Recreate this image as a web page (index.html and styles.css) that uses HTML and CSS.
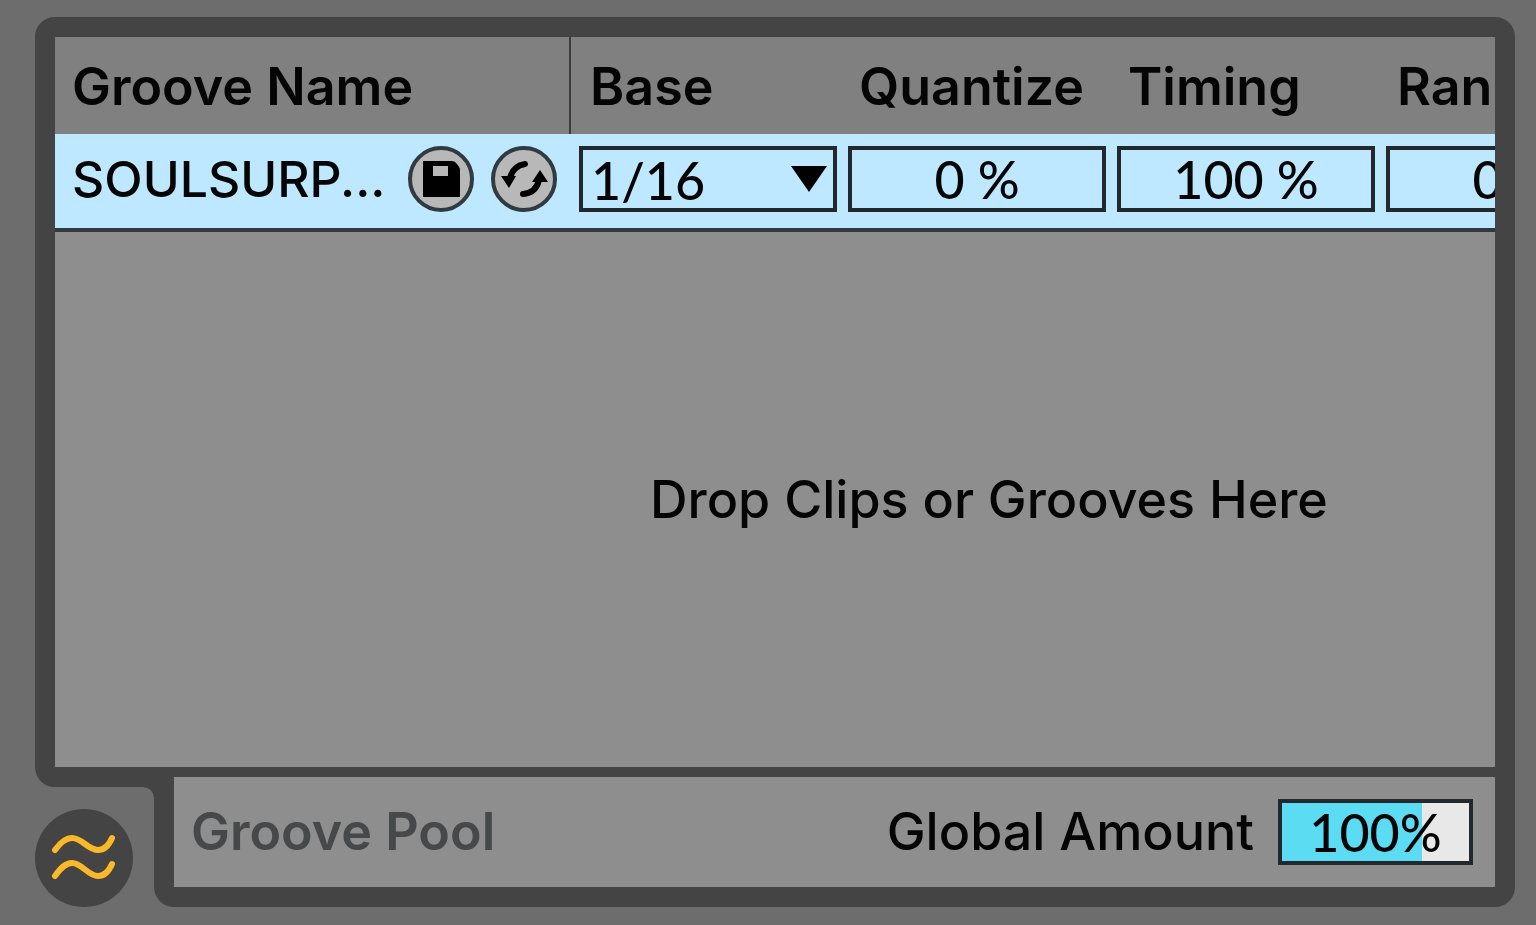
FILE: index.html
```html
<!DOCTYPE html>
<html lang="en">
<head>
    <meta charset="UTF-8">
    <meta name="viewport" content="width=device-width, initial-scale=1.0">
    <title>Groove Pool</title>
    <link rel="stylesheet" href="styles.css">
</head>
<body>
    <main class="groove-pool">
        <section class="pool-list">
            <div class="pool-scroll">
                <table class="groove-table">
                    <thead>
                        <tr>
                            <th class="col-name">Groove Name</th>
                            <th>Base</th>
                            <th>Quantize</th>
                            <th>Timing</th>
                            <th>Ran</th>
                        </tr>
                    </thead>
                    <tbody>
                        <tr>
                            <td>
                                <div class="name-cell">
                                    <span class="groove-name">SOULSURP...</span>
                                    <button class="round-btn" type="button" aria-label="Save Groove">
                                        <svg viewBox="0 0 66 66">
                                            <path d="M15 15h29q3 0 5 3l2 3q1 1 1 3v27H15z"/>
                                            <path class="cutout" d="M25 20h15v10H25z"/>
                                        </svg>
                                    </button>
                                    <button class="round-btn" type="button" aria-label="Hot-Swap Groove">
                                        <svg viewBox="0 0 66 66">
                                            <path class="arc" d="M34 18Q22 20 19 32"/>
                                            <path d="M10 30h15l-7 12z"/>
                                            <path class="arc" d="M32 48Q45 47 48 34"/>
                                            <path d="M41 36h16l-8-12z"/>
                                        </svg>
                                    </button>
                                </div>
                            </td>
                            <td>
                                <div class="select-box">
                                    <select class="field" aria-label="Base">
                                        <option>1/16</option>
                                    </select>
                                    <svg class="arrow" viewBox="0 0 36 26"><path d="M0 0h36L18 26z"/></svg>
                                </div>
                            </td>
                            <td><input class="field" type="text" value="0 %" aria-label="Quantize"></td>
                            <td><input class="field" type="text" value="100 %" aria-label="Timing"></td>
                            <td><input class="field" type="text" value="0 %" aria-label="Random"></td>
                        </tr>
                    </tbody>
                </table>
                <p class="drop-area">Drop Clips or Grooves Here</p>
            </div>
        </section>

        <div class="pool-bottom">
            <button class="pool-toggle" type="button" aria-label="Show/Hide Groove Pool">
                <svg viewBox="0 0 98 98">
                    <path d="M20 41C25 34 30 29 37 29C47 29 53 41 63 41C70 41 74 36 77 29"/>
                    <path d="M20 67C25 60 30 54 37 54C47 54 53 67 63 67C70 67 74 62 77 55"/>
                </svg>
            </button>
            <footer class="pool-footer">
                <h1>Groove Pool</h1>
                <label for="global-amount">Global Amount</label>
                <input class="field amount" id="global-amount" type="text" value="100%">
            </footer>
        </div>
    </main>
</body>
</html>
```
FILE: styles.css
```css
:root {
    --background-color: #6d6d6d;
    --frame-color: #444444;
    --header-color: #808080;
    --panel-color: #8e8e8e;
    --row-color: #bee8ff;
    --line-color: #303a40;
    --wave-color: #fbb829;
}

* {
    margin: 0;
    padding: 0;
    box-sizing: border-box;
}

body {
    font-family: Inter, "Liberation Sans", sans-serif;
    font-size: 52px;
    font-weight: 500;
    line-height: 60px;
    background-color: var(--background-color);
    color: #050505;
}

button,
input,
select {
    font: inherit;
    color: inherit;
}

.groove-pool {
    display: flex;
    flex-direction: column;
    height: 100vh;
    padding: 17px 21px 18px 35px;
}

/* Groove list */
.pool-list {
    flex: 1;
    display: flex;
    min-height: 0;
    border: 20px solid var(--frame-color);
    border-radius: 20px;
    background-color: var(--frame-color);
    overflow: hidden;
}

.pool-scroll {
    flex: 1;
    display: flex;
    flex-direction: column;
    min-width: 0;
    overflow: hidden;
    background-color: var(--panel-color);
}

.groove-table {
    table-layout: fixed;
    width: 1868px;
    border-spacing: 0;
}

th {
    height: 97px;
    padding: 3px 0 0 19px;
    background-color: var(--header-color);
    font-weight: 600;
    text-align: left;
}

.groove-table th:not(.col-name) {
    width: 269px;
}

.groove-table th:last-child {
    width: auto;
}

.groove-table .col-name {
    width: 516px;
    padding-left: 17px;
    border-right: 2px solid #3a3a3a;
}

td {
    height: 98px;
    padding: 0 3px 4px 8px;
    background-color: var(--row-color);
    border-bottom: 4px solid var(--line-color);
}

.name-cell {
    display: flex;
    align-items: center;
    gap: 17px;
    padding: 0 11px 0 9px;
}

.groove-name {
    flex: 1;
    min-width: 0;
    font-size: 50px;
    white-space: nowrap;
}

.round-btn {
    flex: none;
    width: 66px;
    height: 66px;
    border: 4px solid var(--line-color);
    border-radius: 50%;
    background-color: #b8b8b8;
}

.round-btn svg {
    display: block;
    width: 66px;
    height: 66px;
    margin: -4px;
}

.round-btn .cutout {
    fill: #b8b8b8;
}

.round-btn .arc {
    fill: none;
    stroke: #000000;
    stroke-width: 6;
    stroke-linecap: round;
}

.field {
    display: block;
    width: 258px;
    height: 66px;
    border: 4px solid #22282b;
    border-radius: 0;
    background-color: transparent;
    font-family: Lato, "Liberation Sans", sans-serif;
    text-align: center;
}

.select-box {
    position: relative;
    width: 258px;
}

select.field {
    appearance: none;
    padding-left: 8px;
    text-align: left;
}

.select-box .arrow {
    position: absolute;
    top: 20px;
    right: 10px;
    width: 36px;
    height: 26px;
    pointer-events: none;
}

.drop-area {
    flex: 1;
    display: flex;
    align-items: center;
    justify-content: center;
    width: 1868px;
}

/* Bottom strip, its frame shares the lower edge of the list */
.pool-bottom {
    display: flex;
    align-items: flex-end;
    gap: 21px;
    margin-top: -20px;
}

.pool-toggle {
    flex: none;
    width: 98px;
    height: 98px;
    border: none;
    border-radius: 50%;
    background-color: var(--frame-color);
}

.pool-toggle svg {
    display: block;
    fill: none;
    stroke: var(--wave-color);
    stroke-width: 6;
    stroke-linecap: round;
}

.pool-footer {
    position: relative;
    flex: 1;
    display: flex;
    align-items: center;
    gap: 24px;
    height: 140px;
    padding: 0 22px 0 17px;
    border: 20px solid var(--frame-color);
    border-top-width: 10px;
    border-radius: 0 0 20px 20px;
    background-color: var(--panel-color);
}

/* rounded inner corner between the two frames */
.pool-footer::before {
    content: '';
    position: absolute;
    top: 10px;
    left: -30px;
    width: 10px;
    height: 10px;
    background: radial-gradient(circle at bottom left, transparent 9px, var(--frame-color) 10px);
}

.pool-footer h1 {
    flex: 1;
    font-size: 52px;
    font-weight: 600;
    color: #47484a;
}

.amount {
    width: 195px;
    background: linear-gradient(to right, #5cdcf2 75%, #e8e8e8 75%);
}
```
